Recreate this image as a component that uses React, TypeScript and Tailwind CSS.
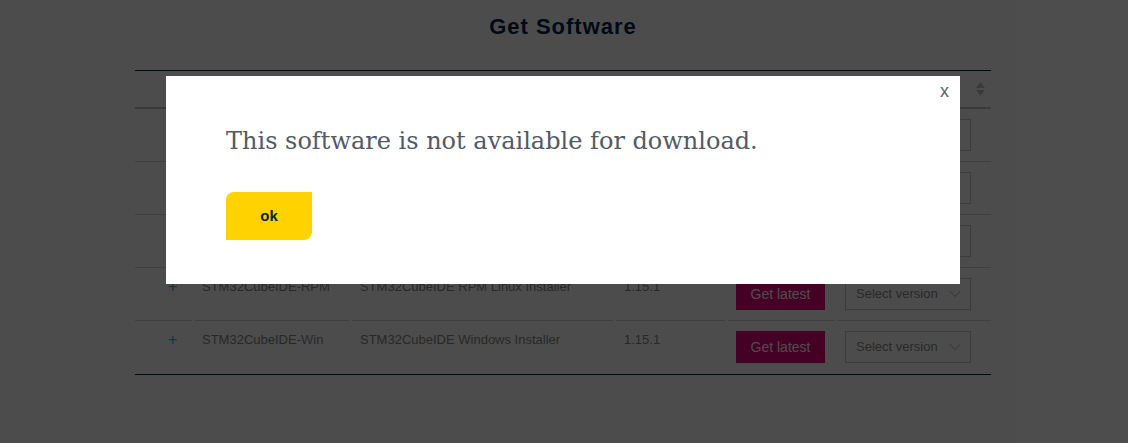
import React from 'react';
import { ChevronDown } from 'lucide-react';

type Row = {
  part: string;
  description: string;
  version: string;
};

const rows: Row[] = [
  { part: 'STM32CubeIDE-DEB', description: 'STM32CubeIDE Debian Linux Installer', version: '1.15.1' },
  { part: 'STM32CubeIDE-Lnx', description: 'STM32CubeIDE Generic Linux Installer', version: '1.15.1' },
  { part: 'STM32CubeIDE-Mac', description: 'STM32CubeIDE macOS Installer', version: '1.15.1' },
  { part: 'STM32CubeIDE-RPM', description: 'STM32CubeIDE RPM Linux Installer', version: '1.15.1' },
  { part: 'STM32CubeIDE-Win', description: 'STM32CubeIDE Windows Installer', version: '1.15.1' },
];

const cols = 'grid grid-cols-[57px_154px_261px_109px_107px_153px] gap-x-[3px]';

const SortIcon = () => (
  <svg width="9" height="14" viewBox="0 0 9 14" className="text-[#c4c4c4]">
    <path d="M4.5 0 L9 6 H0 Z" fill="currentColor" />
    <path d="M4.5 14 L9 8 H0 Z" fill="currentColor" />
  </svg>
);

export default function App() {
  return (
    <div className="relative h-screen w-full bg-white font-['Liberation_Sans',Arial,sans-serif]">
      <div className="pt-[13px] pr-[2px]">
        <h1 className="text-center text-[22px] font-bold leading-[28px] tracking-[1px] text-[#03234b]">
          Get Software
        </h1>
      </div>

      <div className="ml-[135px] mt-[29px] w-[856px] border-y border-[#03234b]">
        {/* header */}
        <div className={cols}>
          <div className="h-[38px] border-b-2 border-[#c4c4c4]" />
          <div className="h-[38px] border-b-2 border-[#c4c4c4] px-2 pt-3 text-[13px] font-bold text-[#03234b]">Part Number</div>
          <div className="h-[38px] border-b-2 border-[#c4c4c4] px-2 pt-3 text-[13px] font-bold text-[#03234b]">General Description</div>
          <div className="h-[38px] border-b-2 border-[#c4c4c4] px-2 pt-3 text-[13px] font-bold text-[#03234b]">Latest version</div>
          <div className="h-[38px] border-b-2 border-[#c4c4c4] px-2 pt-3 text-[13px] font-bold text-[#03234b]">Download</div>
          <div className="flex h-[38px] items-center justify-between border-b-2 border-[#c4c4c4] pl-2 pr-[6px] text-[13px] font-bold text-[#03234b]">
            <span>All versions</span>
            <SortIcon />
          </div>
        </div>

        {rows.map((row, i) => {
          const line = i === rows.length - 1 ? '' : 'border-b border-[#d2d2d2]';
          return (
            <div key={row.part} className={cols}>
              <div className={`h-[53px] pl-[33px] pt-[7px] text-[16px] text-[#3cb4e6] ${line}`}>+</div>
              <div className={`h-[53px] pl-[7px] pt-[9px] text-[13px] text-[#888] ${line}`}>{row.part}</div>
              <div className={`h-[53px] pl-[8px] pt-[9px] text-[13px] text-[#888] ${line}`}>{row.description}</div>
              <div className={`h-[53px] pl-[8px] pt-[9px] text-[13px] text-[#888] ${line}`}>{row.version}</div>
              <div className={`h-[53px] pl-[8px] pt-[10px] ${line}`}>
                <button className="h-[32px] w-[89px] bg-[#e6007e] text-[14px] text-white">Get latest</button>
              </div>
              <div className={`h-[53px] pl-[7px] pt-[10px] ${line}`}>
                <div className="flex h-[32px] w-[126px] items-center justify-between border border-[#c8c8c8] pl-[10px] pr-[5px] text-[13px] text-[#8a8a8a]">
                  <span>Select version</span>
                  <ChevronDown className="h-[20px] w-[20px] text-[#d0d0d0]" strokeWidth={1.5} />
                </div>
              </div>
            </div>
          );
        })}
      </div>

      {/* modal */}
      <div className="absolute inset-0 bg-black/70 pl-[166px] pt-[76px]">
        <div className="relative h-[208px] w-[794px] bg-white pl-[60px] pt-[50px]">
          <button className="absolute right-[11px] top-[2px] text-[18px] text-[#5a6270]">x</button>
          <p className="font-['DejaVu_Serif',serif] text-[24px] leading-[30px] text-[#525a65]">
            This software is not available for download.
          </p>
          <button className="mt-[36px] h-[48px] w-[86px] rounded-tl-[8px] rounded-br-[8px] bg-[#ffd200] text-[15px] font-bold text-[#03234b]">
            ok
          </button>
        </div>
      </div>
    </div>
  );
}
